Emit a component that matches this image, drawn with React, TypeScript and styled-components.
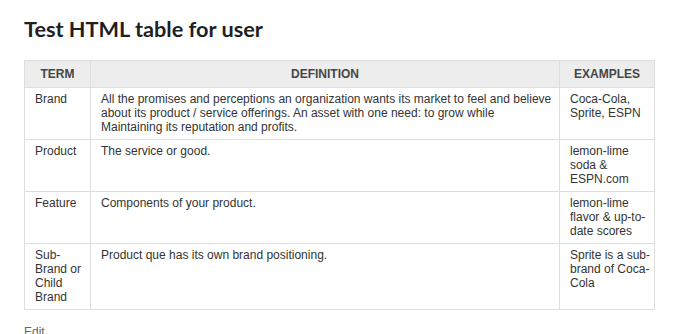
import React from "react";
import styled, { createGlobalStyle } from "styled-components";

const GlobalStyle = createGlobalStyle`
  body {
    margin: 0;
    background: #ffffff;
    font-family: "Liberation Sans", Arial, sans-serif;
    color: #333333;
  }
`;

const Page = styled.div`
  padding: 14px 22px 0 24px;
`;

const Title = styled.h1`
  margin: 0 0 16px;
  font-family: Lato, "Open Sans", sans-serif;
  font-weight: 700;
  font-size: 21.7px;
  line-height: 30px;
  color: #1f1f1f;
`;

const Table = styled.table`
  border-collapse: collapse;
  table-layout: fixed;
  width: 630px;
  font-size: 12px;
  line-height: 14px;
`;

const Head = styled.th<{ $w: number }>`
  box-sizing: border-box;
  width: ${(p) => p.$w}px;
  height: 27px;
  padding: 0 10px;
  background: #ededed;
  border: 1px solid #dedede;
  color: #464646;
  font-weight: 700;
  text-transform: uppercase;
  text-align: center;
  vertical-align: middle;
`;

const Cell = styled.td<{ $padRight?: number }>`
  padding: 4px ${(p) => p.$padRight ?? 4}px 5px 10px;
  border: 1px solid #dedede;
  color: #333333;
  vertical-align: top;
  text-align: left;
`;

const Edit = styled.div`
  margin-top: 15px;
  font-size: 12px;
  color: #666666;
`;

type Row = { term: string; definition: string; examples: string };

const rows: Row[] = [
  {
    term: "Brand",
    definition:
      "All the promises and perceptions an organization wants its market to feel and believe about its product / service offerings. An asset with one need: to grow while Maintaining its reputation and profits.",
    examples: "Coca-Cola, Sprite, ESPN",
  },
  {
    term: "Product",
    definition: "The service or good.",
    examples: "lemon-lime soda & ESPN.com",
  },
  {
    term: "Feature",
    definition: "Components of your product.",
    examples: "lemon-lime flavor & up-to-date scores",
  },
  {
    term: "Sub-Brand or Child Brand",
    definition: "Product que has its own brand positioning.",
    examples: "Sprite is a sub-brand of Coca-Cola",
  },
];

export default function App() {
  return (
    <Page>
      <GlobalStyle />
      <Title>Test HTML table for user</Title>
      <Table>
        <thead>
          <tr>
            <Head $w={66}>Term</Head>
            <Head $w={469}>Definition</Head>
            <Head $w={95}>Examples</Head>
          </tr>
        </thead>
        <tbody>
          {rows.map((r) => (
            <tr key={r.term}>
              <Cell>{r.term}</Cell>
              <Cell>{r.definition}</Cell>
              <Cell $padRight={0}>{r.examples}</Cell>
            </tr>
          ))}
        </tbody>
      </Table>
      <Edit>Edit</Edit>
    </Page>
  );
}
